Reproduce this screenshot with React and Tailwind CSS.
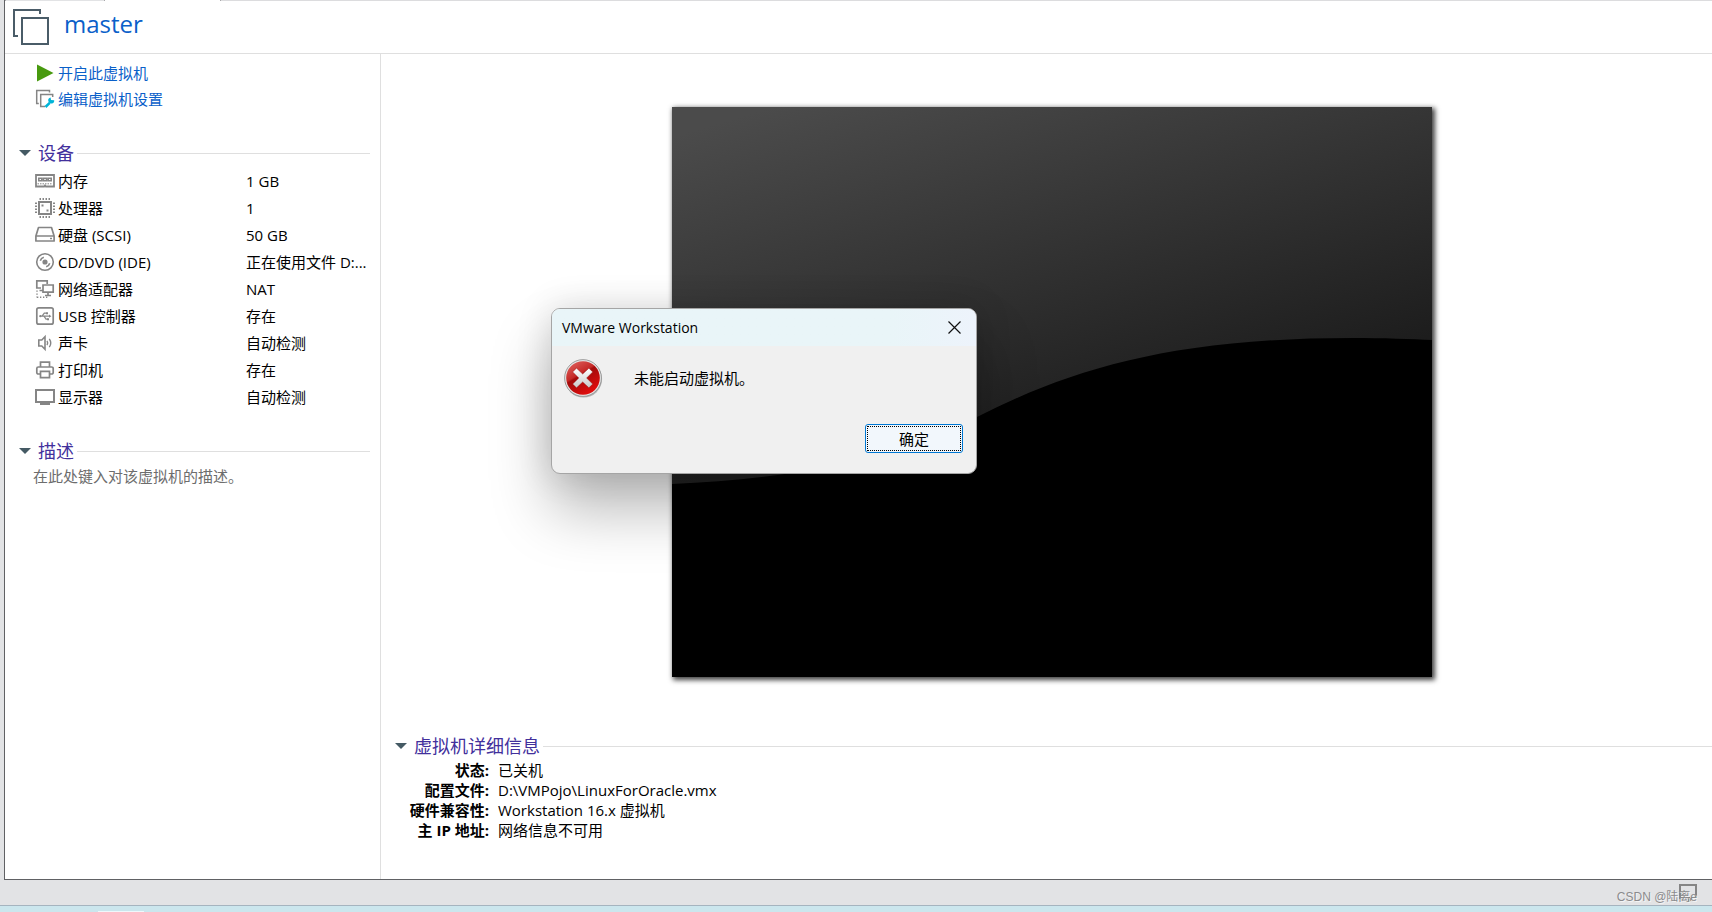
const MemoryIcon = () => (
  <svg width="20" height="20" viewBox="0 0 20 20" fill="none" stroke="#858585" aria-hidden="true">
    <path d="M1 4h18v11.5h-8.2l-.8-1-.8 1H1z" strokeWidth="1.8" />
    <path d="M3.8 7.2h3v2.6h-3zM8.5 7.2h3v2.6h-3zM13.2 7.2h3v2.6h-3z" strokeWidth="1.6" />
    <path d="M2.5 12.8h15" strokeDasharray="1.5 1" />
  </svg>
)

const CpuIcon = () => (
  <svg width="20" height="20" viewBox="0 0 20 20" fill="none" stroke="#858585" aria-hidden="true">
    <rect x="4" y="4" width="12" height="12" strokeWidth="2" />
    <path d="M4.5 1h11M4.5 19h11" strokeWidth="2" strokeDasharray="1.5 1.5" />
    <path d="M1 4.5v11M19 4.5v11" strokeWidth="2" strokeDasharray="1.5 1.5" />
    <path d="M6.5 7.5h2M11.5 12.5h2" strokeWidth="2" />
  </svg>
)

const DiskIcon = () => (
  <svg width="20" height="20" viewBox="0 0 20 20" fill="none" stroke="#858585" strokeWidth="1.7" aria-hidden="true">
    <path d="M3.5 2.5h13l2.6 8.5v5H.9v-5zM.9 11h18.2" strokeLinejoin="round" />
    <path d="M15 13.5h2" />
  </svg>
)

const DiscIcon = () => (
  <svg width="20" height="20" viewBox="0 0 20 20" fill="none" stroke="#858585" strokeWidth="1.6" aria-hidden="true">
    <circle cx="10" cy="10" r="8.3" />
    <circle cx="10" cy="10" r="1.8" fill="#858585" />
    <path d="M5.3 8.8a5 5 0 0 1 3.5-3.5M14.7 11.2a5 5 0 0 1-3.5 3.5" />
  </svg>
)

const NetworkIcon = () => (
  <svg width="20" height="20" viewBox="0 0 20 20" fill="none" stroke="#858585" strokeWidth="1.7" aria-hidden="true">
    <path d="M6 9H1.8V1.8h10.4V5M4.5 11.5h3M8 6h10.2v7.2H8zM13 13.5v3M10 16.5h6" />
    <path d="M2 11.5v7M2 18.3h11" strokeWidth="1.4" strokeDasharray="1.3 1.7" />
  </svg>
)

const UsbIcon = () => (
  <svg width="20" height="20" viewBox="0 0 20 20" fill="none" stroke="#858585" strokeWidth="1.7" aria-hidden="true">
    <rect x="1.8" y="1.8" width="16.4" height="16.4" rx="2" />
    <path d="M5 10.2h10M7 10.2l2.3-3h1.9M9 10.2l2 3h1.6" strokeWidth="1.2" />
    <circle cx="5.3" cy="10.2" r="1.1" fill="#858585" stroke="none" />
    <path d="M11 6.2h2v2h-2zM12 12.2h2v2h-2zM14 8.6l2.4 1.6-2.4 1.6z" fill="#858585" stroke="none" />
  </svg>
)

const SoundIcon = () => (
  <svg width="20" height="20" viewBox="0 0 20 20" fill="none" stroke="#858585" strokeWidth="1.6" aria-hidden="true">
    <path d="M3.8 7h3L10 3.8v12.4L6.8 13h-3z" />
    <path d="M12 7.8c.9 1.4.9 3 0 4.4M14.3 5.8c1.8 2.6 1.8 5.8 0 8.4" strokeWidth="1.4" />
  </svg>
)

const PrinterIcon = () => (
  <svg width="20" height="20" viewBox="0 0 20 20" fill="none" stroke="#858585" strokeWidth="1.7" aria-hidden="true">
    <path d="M5.5 7V2.2h9V7M5.5 14H3.3a1.5 1.5 0 0 1-1.5-1.5v-4A1.5 1.5 0 0 1 3.3 7h13.4a1.5 1.5 0 0 1 1.5 1.5v4a1.5 1.5 0 0 1-1.5 1.5h-2.2M5.5 11.3h9v6.3h-9z" />
  </svg>
)

const DisplayIcon = () => (
  <svg width="20" height="20" viewBox="0 0 20 20" fill="none" stroke="#858585" aria-hidden="true">
    <path d="M1 3h18v12H1z" strokeWidth="2" />
    <path d="M5 17h10" strokeWidth="2" />
  </svg>
)

const SettingsIcon = () => (
  <svg width="20" height="20" viewBox="0 0 20 20" fill="none" stroke="#858585" strokeWidth="1.5" aria-hidden="true">
    <path d="M3.8 14.4H1.7V1.6h12.8v2M10 17.6H5.7V5.6h12V8" />
    <path d="M10.5 18l4.2-4.2" stroke="#00b4d8" strokeWidth="2.6" />
    <path d="M19.2 11.2a3 3 0 1 1-3.6-2.6l.4 2.4z" fill="#00b4d8" stroke="none" />
  </svg>
)

const ErrorIcon = () => (
  <svg width="40" height="40" viewBox="0 0 40 40" aria-hidden="true">
    <defs>
      <linearGradient id="err-fill" x1="0" y1="0" x2="0.6" y2="1">
        <stop offset="0" stopColor="#e36a66" />
        <stop offset="0.45" stopColor="#c52a28" />
        <stop offset="0.5" stopColor="#a30b0b" />
        <stop offset="1" stopColor="#e00d0d" />
      </linearGradient>
      <linearGradient id="err-cross" x1="0" y1="0" x2="0" y2="1">
        <stop offset="0" stopColor="#ffffff" />
        <stop offset="1" stopColor="#c9c9c9" />
      </linearGradient>
    </defs>
    <circle cx="20.5" cy="21" r="18.6" fill="#b5b5b5" />
    <circle cx="20" cy="20" r="18.4" fill="#e6e6e6" stroke="#8c8c8c" strokeWidth="0.8" />
    <circle cx="20" cy="20" r="16.8" fill="url(#err-fill)" />
    <path
      d="M13.5 10.2l6.2 5.9 6.2-5.9 3.8 3.7-6.1 6.1 6.1 6.1-3.8 3.7-6.2-5.9-6.2 5.9-3.8-3.7 6.1-6.1-6.1-6.1z"
      fill="url(#err-cross)"
      stroke="#8f1414"
      strokeWidth="0.4"
    />
  </svg>
)

const devices = [
  { icon: MemoryIcon, name: '内存', value: '1 GB' },
  { icon: CpuIcon, name: '处理器', value: '1' },
  { icon: DiskIcon, name: '硬盘 (SCSI)', value: '50 GB' },
  { icon: DiscIcon, name: 'CD/DVD (IDE)', value: '正在使用文件 D:...' },
  { icon: NetworkIcon, name: '网络适配器', value: 'NAT' },
  { icon: UsbIcon, name: 'USB 控制器', value: '存在' },
  { icon: SoundIcon, name: '声卡', value: '自动检测' },
  { icon: PrinterIcon, name: '打印机', value: '存在' },
  { icon: DisplayIcon, name: '显示器', value: '自动检测' },
]

const details = [
  { label: '状态:', value: '已关机' },
  { label: '配置文件:', value: 'D:\\VMPojo\\LinuxForOracle.vmx' },
  { label: '硬件兼容性:', value: 'Workstation 16.x 虚拟机' },
  { label: '主 IP 地址:', value: '网络信息不可用' },
]

const SectionHeading = ({ title }) => (
  <h2 className="h-6 text-lg leading-6 text-[#42309c]">
    <button type="button" className="flex w-full items-center">
      <svg width="12" height="6" viewBox="0 0 12 6" className="mr-[7px] shrink-0" aria-hidden="true">
        <path d="M0 0h12L6 6z" fill="#455a64" />
      </svg>
      {title}
      <span className="ml-[3px] h-px flex-1 bg-[#dfdfdf]" />
    </button>
  </h2>
)

const Sidebar = () => (
  <aside className="w-[376px] shrink-0 border-r border-[#dfdfdf] py-[6px] pr-[10px] pl-[14px]">
    <nav className="flex flex-col pl-4 text-[#0a60c9]">
      <a href="#start" className="flex h-[26px] items-center gap-[3px]">
        <svg width="20" height="20" viewBox="0 0 20 20" aria-hidden="true">
          <path d="M2 1.5l16.5 8.5L2 18.5z" fill="#489a0f" />
        </svg>
        开启此虚拟机
      </a>
      <a href="#settings" className="flex h-[26px] items-center gap-[3px]">
        <SettingsIcon />
        编辑虚拟机设置
      </a>
    </nav>

    <section className="mt-[29px]">
      <SectionHeading title="设备" />
      <table className="mt-[2px] ml-4 table-fixed">
        <tbody>
          {devices.map(({ icon: Icon, name, value }) => (
            <tr key={name} className="h-[27px]">
              <th scope="row" className="w-[211px] p-0 text-left font-normal">
                <span className="flex items-center gap-[3px]">
                  <Icon />
                  {name}
                </span>
              </th>
              <td className="p-0 whitespace-nowrap">{value}</td>
            </tr>
          ))}
        </tbody>
      </table>
    </section>

    <section className="mt-[29px]">
      <SectionHeading title="描述" />
      <textarea
        aria-label="描述"
        rows={2}
        placeholder="在此处键入对该虚拟机的描述。"
        className="ml-[14px] w-80 resize-none py-[3px] leading-5 outline-none placeholder:text-[#6d6d6d]"
      />
    </section>
  </aside>
)

const Preview = () => (
  <div className="w-full max-w-[760px] shadow-[2px_2px_5px_1px_rgba(0,0,0,0.75)]">
    <svg viewBox="0 0 760 570" className="block w-full" role="img" aria-label="虚拟机屏幕">
      <defs>
        <linearGradient id="screen" gradientUnits="userSpaceOnUse" x1="100" y1="0" x2="220" y2="400">
          <stop offset="0" stopColor="#4b4b4b" />
          <stop offset="1" stopColor="#1c1c1c" />
        </linearGradient>
      </defs>
      <rect width="760" height="570" fill="url(#screen)" />
      <path
        d="M0 377C110 373 210 355 305 310C400 262 500 231 681 231C710 231 740 232 760 233V570H0z"
        fill="#000"
      />
    </svg>
  </div>
)

const ErrorDialog = () => (
  <div
    role="alertdialog"
    aria-labelledby="dialog-title"
    aria-describedby="dialog-text"
    className="absolute top-[308px] left-[551px] w-[426px] overflow-hidden rounded-[9px] border border-[#a5a5a5] bg-[#f0f0f0] shadow-[0_36px_60px_rgba(0,0,0,0.28),0_0_36px_rgba(0,0,0,0.14)]"
  >
    <div className="flex h-[37px] items-center justify-between bg-linear-to-r from-[#e9f5f8] from-80% to-[#edf3fb] pr-[15px] pl-[10px]">
      <h2 id="dialog-title" className="font-['Open_Sans','Noto_Sans',sans-serif] text-sm">VMware Workstation</h2>
      <button type="button" aria-label="关闭">
        <svg width="13" height="13" viewBox="0 0 13 13" stroke="#111" strokeWidth="1.2" aria-hidden="true">
          <path d="M.5.5l12 12M12.5.5l-12 12" />
        </svg>
      </button>
    </div>
    <div className="flex items-center gap-[31px] px-[11px] pt-3">
      <ErrorIcon />
      <p id="dialog-text">未能启动虚拟机。</p>
    </div>
    <div className="flex justify-end px-[13px] pt-[26px] pb-5">
      <button type="button" className="h-[29px] w-[98px] rounded-[3px] border border-[#0078d4] bg-[#f2f7fc] p-px">
        <span className="flex h-full items-center justify-center border border-dotted border-black">确定</span>
      </button>
    </div>
  </div>
)

export default function App() {
  return (
    <div className="relative flex min-h-screen flex-col bg-[#e2e3e5] font-['Open_Sans','Noto_Sans_CJK_SC',sans-serif] text-[15px] leading-5 text-black">
      <div className="ml-1 flex flex-1 flex-col border-b border-l border-[#606164] bg-white">
        <div className="flex h-px">
          <span className="w-[100px] border-x border-[#a9a9ab] bg-[#e2e3e5]" />
          <span className="w-[115px]" />
          <span className="flex-1 border-l border-[#a9a9ab] bg-[#dcdcde]" />
        </div>
        <header className="flex h-[53px] items-center gap-[15px] border-b border-[#dfdfdf] pl-2">
          <svg width="36" height="36" viewBox="0 0 36 36" fill="none" stroke="#4a5c68" strokeWidth="2" aria-hidden="true">
            <path d="M5 27H1V1h26v4" />
            <path d="M9 9h26v26H9z" />
          </svg>
          <h1 className="pb-[6px] text-2xl leading-8 text-[#0a60c9]">master</h1>
        </header>

        <div className="flex flex-1">
          <Sidebar />
          <main className="flex min-w-0 flex-1 flex-col">
            <div className="flex justify-center pt-[53px] pl-[10px]">
              <Preview />
            </div>
            <section className="mt-[57px] pb-9 pl-[14px]">
              <SectionHeading title="虚拟机详细信息" />
              <dl className="mt-[2px] grid grid-cols-[94px_1fr] gap-x-[9px]">
                {details.map(({ label, value }) => (
                  <div key={label} className="contents">
                    <dt className="text-right font-bold whitespace-nowrap">{label}</dt>
                    <dd>{value}</dd>
                  </div>
                ))}
              </dl>
            </section>
          </main>
        </div>
      </div>

      <footer className="shrink-0">
        <div className="flex h-[25px] items-center justify-end pr-[15px]">
          <button type="button" aria-label="消息日志">
            <svg width="18" height="18" viewBox="0 0 18 18" fill="none" stroke="#858585" strokeWidth="2" aria-hidden="true">
              <path d="M1 1h16v13h-4l-3 3v-3H1z" />
            </svg>
          </button>
        </div>
        <div className="flex h-[7px] items-end border-t border-[#a5b4bf] bg-[#cbe6ed] pl-[98px]">
          <span className="h-px w-[46px] bg-[#eef8fb]" />
        </div>
      </footer>

      <span className="absolute right-[15px] bottom-[7px] text-xs leading-4 text-[#8b8b8d] [text-shadow:1px_1px_0_#f4f4f4] font-['Liberation_Sans','Noto_Sans_CJK_SC',sans-serif]">
        CSDN @陆离e
      </span>
      <ErrorDialog />
    </div>
  )
}
